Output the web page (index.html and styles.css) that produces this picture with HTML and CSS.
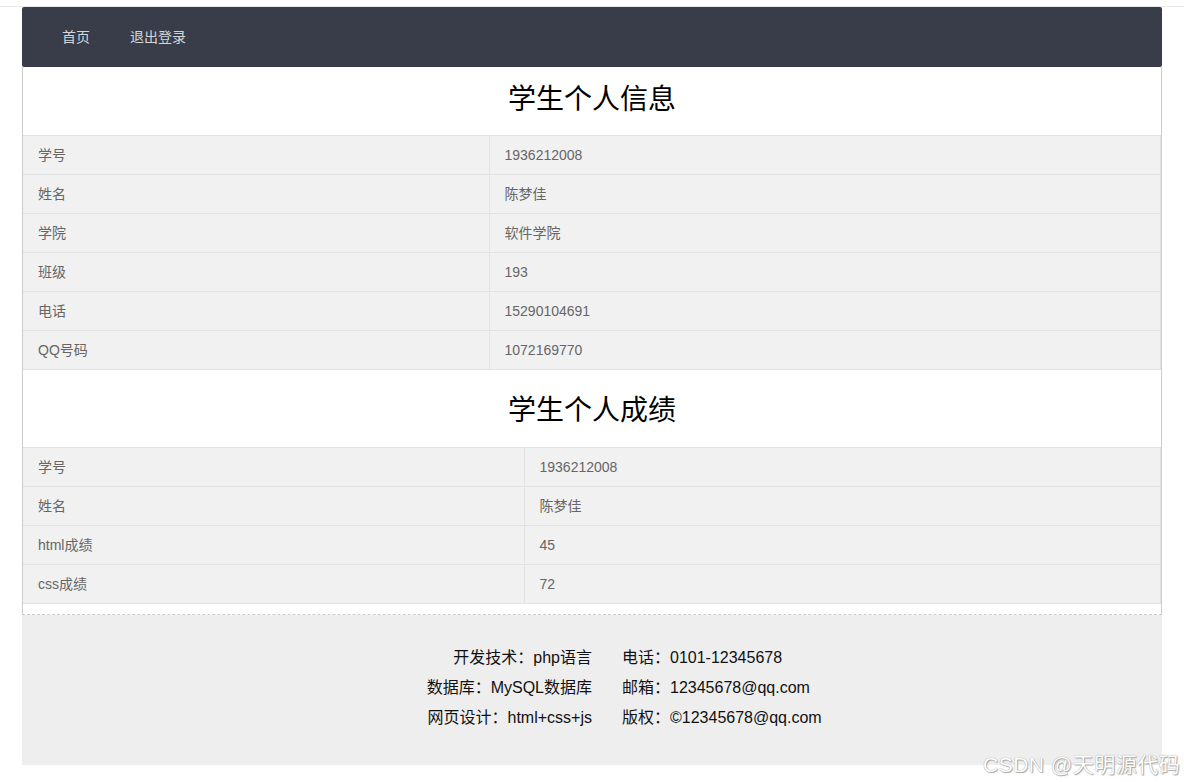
FILE: index.html
```html
<!DOCTYPE html>
<html lang="zh-CN">
<head>
<meta charset="UTF-8">
<title>学生个人信息</title>
<link rel="stylesheet" href="styles.css">
</head>
<body>
<div class="page">
    <div class="wrap">
        <ul class="nav">
            <li><a href="#">首页</a></li>
            <li><a href="#">退出登录</a></li>
        </ul>

        <div class="main">
            <h2 class="title">学生个人信息</h2>
            <table class="info-table">
                <colgroup><col class="c1"><col></colgroup>
                <tr><td>学号</td><td>1936212008</td></tr>
                <tr><td>姓名</td><td>陈梦佳</td></tr>
                <tr><td>学院</td><td>软件学院</td></tr>
                <tr><td>班级</td><td>193</td></tr>
                <tr><td>电话</td><td>15290104691</td></tr>
                <tr><td>QQ号码</td><td>1072169770</td></tr>
            </table>

            <h2 class="title second">学生个人成绩</h2>
            <table class="info-table score">
                <colgroup><col class="c1"><col></colgroup>
                <tr><td>学号</td><td>1936212008</td></tr>
                <tr><td>姓名</td><td>陈梦佳</td></tr>
                <tr><td>html成绩</td><td>45</td></tr>
                <tr><td>css成绩</td><td>72</td></tr>
            </table>
        </div>

        <div class="footer">
            <div class="col left">
                <p>开发技术：php语言</p>
                <p>数据库：MySQL数据库</p>
                <p>网页设计：html+css+js</p>
            </div>
            <div class="col right">
                <p>电话：0101-12345678</p>
                <p>邮箱：12345678@qq.com</p>
                <p>版权：©12345678@qq.com</p>
            </div>
        </div>
    </div>
</div>
<div class="watermark">CSDN @天明源代码</div>
</body>
</html>
```
FILE: styles.css
```css
body {
    margin: 0;
    padding-top: 6px;
    font-family: "Liberation Sans", "Noto Sans CJK SC", Arial, sans-serif;
    font-size: 14px;
    color: #333;
    background-color: #fff;
}
.page {
    border-top: 1px solid #e8e8e8;
}
.wrap {
    width: 1140px;
    margin: 0 auto;
}
.nav {
    list-style: none;
    margin: 0;
    padding: 0 20px;
    height: 60px;
    background-color: #393d49;
    border-radius: 2px;
    display: flex;
}
.nav li a {
    display: block;
    padding: 0 20px;
    line-height: 60px;
    color: rgba(255, 255, 255, 0.8);
    text-decoration: none;
    font-size: 14px;
}
.main {
    background-color: #fff;
    border-left: 1px solid #ccc;
    border-right: 1px solid #ccc;
    border-bottom: 1px dashed #ccc;
    padding-bottom: 10px;
}
.title {
    margin: 0;
    padding: 14px 0 16px;
    line-height: 38px;
    font-size: 28px;
    font-weight: normal;
    color: #000;
    text-align: center;
}
.title.second {
    padding-top: 22px;
    padding-bottom: 17px;
}
.info-table {
    width: 100%;
    border-collapse: collapse;
    background-color: #f1f1f1;
    color: #666;
}
.info-table td {
    border: 1px solid #e2e2e2;
    padding: 9px 15px;
    line-height: 20px;
    font-size: 14px;
}
.info-table tr td:first-child {
    border-left: none;
}
.info-table .c1 {
    width: 466px;
}
.info-table.score .c1 {
    width: 501px;
}
.footer {
    background-color: #eee;
    padding: 28px 0 32px;
    display: grid;
    grid-template-columns: 570px 1fr;
    font-size: 16px;
    color: #111;
}
.footer p {
    margin: 0;
    line-height: 30px;
}
.footer .left {
    text-align: right;
}
.footer .right {
    padding-left: 30px;
}
.watermark {
    position: absolute;
    left: 983px;
    top: 748px;
    font-size: 21px;
    color: #fff;
    text-shadow: 0 0 1px #888, 1px 1px 1px #aaa;
    letter-spacing: 0.5px;
}
```
